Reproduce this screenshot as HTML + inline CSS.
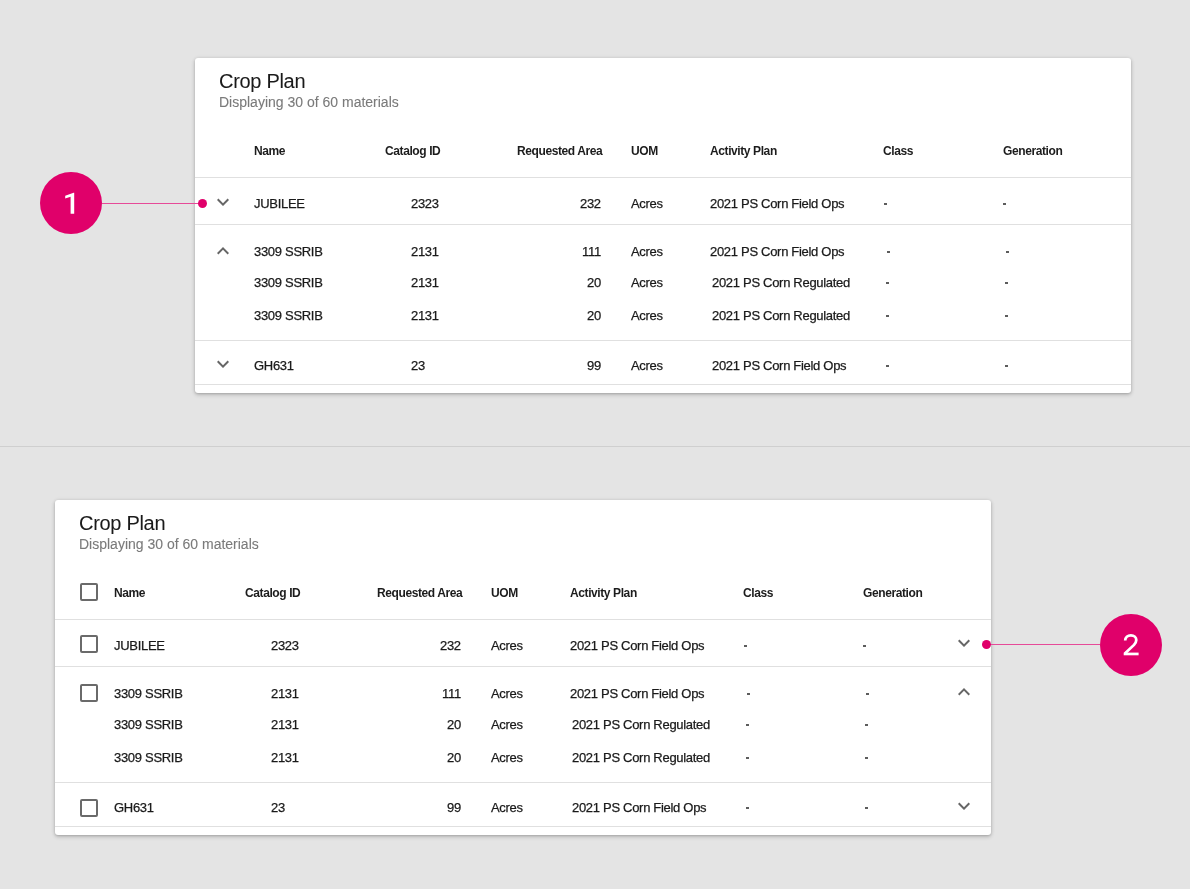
<!DOCTYPE html>
<html><head><meta charset="utf-8"><style>
html,body{margin:0;padding:0}
body{width:1190px;height:889px;background:#e4e4e4;position:relative;overflow:hidden;font-family:"Liberation Sans",sans-serif}
.card{position:absolute;width:936px;height:335px;background:#fff;border-radius:3px;box-shadow:0 2px 4px rgba(0,0,0,0.16),0 1px 2px rgba(0,0,0,0.1),0 0 4px rgba(0,0,0,0.09)}
.t{will-change:transform}
.t{position:absolute;white-space:nowrap;line-height:1}
.ic{position:absolute}
.cb{position:absolute;width:14px;height:14px;border:2px solid #6a6a6a;border-radius:2px}
.hl{position:absolute;height:1px;background:#e0e0e0}
.dash{position:absolute;width:3px;height:2px;background:#5c5c5c}
.hlm{position:absolute;height:1px;background:#e64a98}
.dot{position:absolute;width:9px;height:9px;border-radius:50%;background:#e0006a}
.circ{position:absolute;width:62px;height:62px;border-radius:50%;background:#e0006a;color:#fff}
.div{position:absolute;left:0;width:1190px;top:446px;height:1px;background:#cfcfcf}
</style></head><body>
<div class="card" style="left:195px;top:58px">
<div class="t" style="left:24px;top:13.09px;font-size:20px;font-weight:400;color:#1a1a1a;letter-spacing:-0.3px;-webkit-text-stroke:0.05px #1a1a1a">Crop Plan</div>
<div class="t" style="left:23.5px;top:37.07px;font-size:14px;font-weight:400;color:#7a7a7a;letter-spacing:0px;-webkit-text-stroke:0.1px #7a7a7a">Displaying 30 of 60 materials</div>
<div class="t" style="left:59px;top:86.83px;font-size:12px;font-weight:700;color:#1c1c1c;letter-spacing:-0.4px">Name</div>
<div class="t" style="right:690.5px;top:86.83px;font-size:12px;font-weight:700;color:#1c1c1c;letter-spacing:-0.4px;text-align:right">Catalog ID</div>
<div class="t" style="right:529px;top:86.83px;font-size:12px;font-weight:700;color:#1c1c1c;letter-spacing:-0.4px;text-align:right">Requested Area</div>
<div class="t" style="left:436px;top:86.83px;font-size:12px;font-weight:700;color:#1c1c1c;letter-spacing:-0.4px">UOM</div>
<div class="t" style="left:515px;top:86.83px;font-size:12px;font-weight:700;color:#1c1c1c;letter-spacing:-0.4px">Activity Plan</div>
<div class="t" style="left:688px;top:86.83px;font-size:12px;font-weight:700;color:#1c1c1c;letter-spacing:-0.4px">Class</div>
<div class="t" style="left:807.5px;top:86.83px;font-size:12px;font-weight:700;color:#1c1c1c;letter-spacing:-0.4px">Generation</div>
<div class="hl" style="top:119px;left:0px;width:936px"></div>
<svg class="ic" style="left:16.4px;top:131.6px" width="24" height="24" viewBox="0 0 24 24"><path d="M16.59 8.59L12 13.17 7.41 8.59 6 10l6 6 6-6z" fill="#666"/></svg>
<div class="t" style="left:59px;top:139.30px;font-size:13px;font-weight:400;color:#1a1a1a;letter-spacing:-0.3px;-webkit-text-stroke:0.25px #1a1a1a">JUBILEE</div>
<div class="t" style="left:216px;top:139.30px;font-size:13px;font-weight:400;color:#1a1a1a;letter-spacing:-0.3px;-webkit-text-stroke:0.25px #1a1a1a">2323</div>
<div class="t" style="right:530.5px;top:139.30px;font-size:13px;font-weight:400;color:#1a1a1a;letter-spacing:-0.3px;text-align:right;-webkit-text-stroke:0.25px #1a1a1a">232</div>
<div class="t" style="left:436px;top:139.30px;font-size:13px;font-weight:400;color:#1a1a1a;letter-spacing:-0.3px;-webkit-text-stroke:0.25px #1a1a1a">Acres</div>
<div class="t" style="left:515px;top:139.30px;font-size:13px;font-weight:400;color:#1a1a1a;letter-spacing:-0.3px;-webkit-text-stroke:0.25px #1a1a1a">2021 PS Corn Field Ops</div>
<div class="dash" style="left:689px;top:145px"></div>
<div class="dash" style="left:808px;top:145px"></div>
<svg class="ic" style="left:16.4px;top:180.6px" width="24" height="24" viewBox="0 0 24 24"><path d="M12 8l-6 6 1.41 1.41L12 10.83l4.59 4.58L18 14z" fill="#666"/></svg>
<div class="t" style="left:59px;top:187.30px;font-size:13px;font-weight:400;color:#1a1a1a;letter-spacing:-0.3px;-webkit-text-stroke:0.25px #1a1a1a">3309 SSRIB</div>
<div class="t" style="left:216px;top:187.30px;font-size:13px;font-weight:400;color:#1a1a1a;letter-spacing:-0.3px;-webkit-text-stroke:0.25px #1a1a1a">2131</div>
<div class="t" style="right:530.5px;top:187.30px;font-size:13px;font-weight:400;color:#1a1a1a;letter-spacing:-0.3px;text-align:right;-webkit-text-stroke:0.25px #1a1a1a">111</div>
<div class="t" style="left:436px;top:187.30px;font-size:13px;font-weight:400;color:#1a1a1a;letter-spacing:-0.3px;-webkit-text-stroke:0.25px #1a1a1a">Acres</div>
<div class="t" style="left:515px;top:187.30px;font-size:13px;font-weight:400;color:#1a1a1a;letter-spacing:-0.3px;-webkit-text-stroke:0.25px #1a1a1a">2021 PS Corn Field Ops</div>
<div class="dash" style="left:692px;top:193px"></div>
<div class="dash" style="left:811px;top:193px"></div>
<div class="t" style="left:59px;top:218.30px;font-size:13px;font-weight:400;color:#1a1a1a;letter-spacing:-0.3px;-webkit-text-stroke:0.25px #1a1a1a">3309 SSRIB</div>
<div class="t" style="left:216px;top:218.30px;font-size:13px;font-weight:400;color:#1a1a1a;letter-spacing:-0.3px;-webkit-text-stroke:0.25px #1a1a1a">2131</div>
<div class="t" style="right:530.5px;top:218.30px;font-size:13px;font-weight:400;color:#1a1a1a;letter-spacing:-0.3px;text-align:right;-webkit-text-stroke:0.25px #1a1a1a">20</div>
<div class="t" style="left:436px;top:218.30px;font-size:13px;font-weight:400;color:#1a1a1a;letter-spacing:-0.3px;-webkit-text-stroke:0.25px #1a1a1a">Acres</div>
<div class="t" style="left:516.5px;top:218.30px;font-size:13px;font-weight:400;color:#1a1a1a;letter-spacing:-0.3px;-webkit-text-stroke:0.25px #1a1a1a">2021 PS Corn Regulated</div>
<div class="dash" style="left:691px;top:224px"></div>
<div class="dash" style="left:810px;top:224px"></div>
<div class="t" style="left:59px;top:251.30px;font-size:13px;font-weight:400;color:#1a1a1a;letter-spacing:-0.3px;-webkit-text-stroke:0.25px #1a1a1a">3309 SSRIB</div>
<div class="t" style="left:216px;top:251.30px;font-size:13px;font-weight:400;color:#1a1a1a;letter-spacing:-0.3px;-webkit-text-stroke:0.25px #1a1a1a">2131</div>
<div class="t" style="right:530.5px;top:251.30px;font-size:13px;font-weight:400;color:#1a1a1a;letter-spacing:-0.3px;text-align:right;-webkit-text-stroke:0.25px #1a1a1a">20</div>
<div class="t" style="left:436px;top:251.30px;font-size:13px;font-weight:400;color:#1a1a1a;letter-spacing:-0.3px;-webkit-text-stroke:0.25px #1a1a1a">Acres</div>
<div class="t" style="left:516.5px;top:251.30px;font-size:13px;font-weight:400;color:#1a1a1a;letter-spacing:-0.3px;-webkit-text-stroke:0.25px #1a1a1a">2021 PS Corn Regulated</div>
<div class="dash" style="left:691px;top:257px"></div>
<div class="dash" style="left:810px;top:257px"></div>
<svg class="ic" style="left:16.4px;top:294.0px" width="24" height="24" viewBox="0 0 24 24"><path d="M16.59 8.59L12 13.17 7.41 8.59 6 10l6 6 6-6z" fill="#666"/></svg>
<div class="t" style="left:59px;top:301.30px;font-size:13px;font-weight:400;color:#1a1a1a;letter-spacing:-0.3px;-webkit-text-stroke:0.25px #1a1a1a">GH631</div>
<div class="t" style="left:216px;top:301.30px;font-size:13px;font-weight:400;color:#1a1a1a;letter-spacing:-0.3px;-webkit-text-stroke:0.25px #1a1a1a">23</div>
<div class="t" style="right:530.5px;top:301.30px;font-size:13px;font-weight:400;color:#1a1a1a;letter-spacing:-0.3px;text-align:right;-webkit-text-stroke:0.25px #1a1a1a">99</div>
<div class="t" style="left:436px;top:301.30px;font-size:13px;font-weight:400;color:#1a1a1a;letter-spacing:-0.3px;-webkit-text-stroke:0.25px #1a1a1a">Acres</div>
<div class="t" style="left:516.5px;top:301.30px;font-size:13px;font-weight:400;color:#1a1a1a;letter-spacing:-0.3px;-webkit-text-stroke:0.25px #1a1a1a">2021 PS Corn Field Ops</div>
<div class="dash" style="left:691px;top:307px"></div>
<div class="dash" style="left:810px;top:307px"></div>
<div class="hl" style="top:166px;left:0px;width:936px"></div>
<div class="hl" style="top:282px;left:0px;width:936px"></div>
<div class="hl" style="top:326px;left:0px;width:936px"></div>
</div>
<div class="hlm" style="left:102px;top:203px;width:100px"></div>
<div class="dot" style="left:197.5px;top:198.5px"></div>
<div class="circ" style="left:40px;top:172px"><svg width="62" height="62" style="position:absolute;left:0;top:0"><polygon points="30.60,41.80 34.20,41.80 34.20,20.70 33.60,20.70 25.20,23.80 25.20,26.60 30.60,24.70" fill="#fff"/></svg></div>
<div class="div"></div>
<div class="card" style="left:55px;top:500px">
<div class="t" style="left:24px;top:13.09px;font-size:20px;font-weight:400;color:#1a1a1a;letter-spacing:-0.3px;-webkit-text-stroke:0.05px #1a1a1a">Crop Plan</div>
<div class="t" style="left:23.5px;top:37.07px;font-size:14px;font-weight:400;color:#7a7a7a;letter-spacing:0px;-webkit-text-stroke:0.1px #7a7a7a">Displaying 30 of 60 materials</div>
<div class="cb" style="left:24.5px;top:83.45px"></div>
<div class="t" style="left:59px;top:86.83px;font-size:12px;font-weight:700;color:#1c1c1c;letter-spacing:-0.4px">Name</div>
<div class="t" style="right:690.5px;top:86.83px;font-size:12px;font-weight:700;color:#1c1c1c;letter-spacing:-0.4px;text-align:right">Catalog ID</div>
<div class="t" style="right:529px;top:86.83px;font-size:12px;font-weight:700;color:#1c1c1c;letter-spacing:-0.4px;text-align:right">Requested Area</div>
<div class="t" style="left:436px;top:86.83px;font-size:12px;font-weight:700;color:#1c1c1c;letter-spacing:-0.4px">UOM</div>
<div class="t" style="left:515px;top:86.83px;font-size:12px;font-weight:700;color:#1c1c1c;letter-spacing:-0.4px">Activity Plan</div>
<div class="t" style="left:688px;top:86.83px;font-size:12px;font-weight:700;color:#1c1c1c;letter-spacing:-0.4px">Class</div>
<div class="t" style="left:807.5px;top:86.83px;font-size:12px;font-weight:700;color:#1c1c1c;letter-spacing:-0.4px">Generation</div>
<div class="hl" style="top:119px;left:0px;width:936px"></div>
<div class="cb" style="left:24.5px;top:134.5px"></div>
<svg class="ic" style="left:897.1px;top:131.2px" width="24" height="24" viewBox="0 0 24 24"><path d="M16.59 8.59L12 13.17 7.41 8.59 6 10l6 6 6-6z" fill="#666"/></svg>
<div class="t" style="left:59px;top:139.30px;font-size:13px;font-weight:400;color:#1a1a1a;letter-spacing:-0.3px;-webkit-text-stroke:0.25px #1a1a1a">JUBILEE</div>
<div class="t" style="left:216px;top:139.30px;font-size:13px;font-weight:400;color:#1a1a1a;letter-spacing:-0.3px;-webkit-text-stroke:0.25px #1a1a1a">2323</div>
<div class="t" style="right:530.5px;top:139.30px;font-size:13px;font-weight:400;color:#1a1a1a;letter-spacing:-0.3px;text-align:right;-webkit-text-stroke:0.25px #1a1a1a">232</div>
<div class="t" style="left:436px;top:139.30px;font-size:13px;font-weight:400;color:#1a1a1a;letter-spacing:-0.3px;-webkit-text-stroke:0.25px #1a1a1a">Acres</div>
<div class="t" style="left:515px;top:139.30px;font-size:13px;font-weight:400;color:#1a1a1a;letter-spacing:-0.3px;-webkit-text-stroke:0.25px #1a1a1a">2021 PS Corn Field Ops</div>
<div class="dash" style="left:689px;top:145px"></div>
<div class="dash" style="left:808px;top:145px"></div>
<div class="cb" style="left:24.5px;top:184.4px"></div>
<svg class="ic" style="left:897.1px;top:180.2px" width="24" height="24" viewBox="0 0 24 24"><path d="M12 8l-6 6 1.41 1.41L12 10.83l4.59 4.58L18 14z" fill="#666"/></svg>
<div class="t" style="left:59px;top:187.30px;font-size:13px;font-weight:400;color:#1a1a1a;letter-spacing:-0.3px;-webkit-text-stroke:0.25px #1a1a1a">3309 SSRIB</div>
<div class="t" style="left:216px;top:187.30px;font-size:13px;font-weight:400;color:#1a1a1a;letter-spacing:-0.3px;-webkit-text-stroke:0.25px #1a1a1a">2131</div>
<div class="t" style="right:530.5px;top:187.30px;font-size:13px;font-weight:400;color:#1a1a1a;letter-spacing:-0.3px;text-align:right;-webkit-text-stroke:0.25px #1a1a1a">111</div>
<div class="t" style="left:436px;top:187.30px;font-size:13px;font-weight:400;color:#1a1a1a;letter-spacing:-0.3px;-webkit-text-stroke:0.25px #1a1a1a">Acres</div>
<div class="t" style="left:515px;top:187.30px;font-size:13px;font-weight:400;color:#1a1a1a;letter-spacing:-0.3px;-webkit-text-stroke:0.25px #1a1a1a">2021 PS Corn Field Ops</div>
<div class="dash" style="left:692px;top:193px"></div>
<div class="dash" style="left:811px;top:193px"></div>
<div class="t" style="left:59px;top:218.30px;font-size:13px;font-weight:400;color:#1a1a1a;letter-spacing:-0.3px;-webkit-text-stroke:0.25px #1a1a1a">3309 SSRIB</div>
<div class="t" style="left:216px;top:218.30px;font-size:13px;font-weight:400;color:#1a1a1a;letter-spacing:-0.3px;-webkit-text-stroke:0.25px #1a1a1a">2131</div>
<div class="t" style="right:530.5px;top:218.30px;font-size:13px;font-weight:400;color:#1a1a1a;letter-spacing:-0.3px;text-align:right;-webkit-text-stroke:0.25px #1a1a1a">20</div>
<div class="t" style="left:436px;top:218.30px;font-size:13px;font-weight:400;color:#1a1a1a;letter-spacing:-0.3px;-webkit-text-stroke:0.25px #1a1a1a">Acres</div>
<div class="t" style="left:516.5px;top:218.30px;font-size:13px;font-weight:400;color:#1a1a1a;letter-spacing:-0.3px;-webkit-text-stroke:0.25px #1a1a1a">2021 PS Corn Regulated</div>
<div class="dash" style="left:691px;top:224px"></div>
<div class="dash" style="left:810px;top:224px"></div>
<div class="t" style="left:59px;top:251.30px;font-size:13px;font-weight:400;color:#1a1a1a;letter-spacing:-0.3px;-webkit-text-stroke:0.25px #1a1a1a">3309 SSRIB</div>
<div class="t" style="left:216px;top:251.30px;font-size:13px;font-weight:400;color:#1a1a1a;letter-spacing:-0.3px;-webkit-text-stroke:0.25px #1a1a1a">2131</div>
<div class="t" style="right:530.5px;top:251.30px;font-size:13px;font-weight:400;color:#1a1a1a;letter-spacing:-0.3px;text-align:right;-webkit-text-stroke:0.25px #1a1a1a">20</div>
<div class="t" style="left:436px;top:251.30px;font-size:13px;font-weight:400;color:#1a1a1a;letter-spacing:-0.3px;-webkit-text-stroke:0.25px #1a1a1a">Acres</div>
<div class="t" style="left:516.5px;top:251.30px;font-size:13px;font-weight:400;color:#1a1a1a;letter-spacing:-0.3px;-webkit-text-stroke:0.25px #1a1a1a">2021 PS Corn Regulated</div>
<div class="dash" style="left:691px;top:257px"></div>
<div class="dash" style="left:810px;top:257px"></div>
<div class="cb" style="left:24.5px;top:298.5px"></div>
<svg class="ic" style="left:897.1px;top:293.59999999999997px" width="24" height="24" viewBox="0 0 24 24"><path d="M16.59 8.59L12 13.17 7.41 8.59 6 10l6 6 6-6z" fill="#666"/></svg>
<div class="t" style="left:59px;top:301.30px;font-size:13px;font-weight:400;color:#1a1a1a;letter-spacing:-0.3px;-webkit-text-stroke:0.25px #1a1a1a">GH631</div>
<div class="t" style="left:216px;top:301.30px;font-size:13px;font-weight:400;color:#1a1a1a;letter-spacing:-0.3px;-webkit-text-stroke:0.25px #1a1a1a">23</div>
<div class="t" style="right:530.5px;top:301.30px;font-size:13px;font-weight:400;color:#1a1a1a;letter-spacing:-0.3px;text-align:right;-webkit-text-stroke:0.25px #1a1a1a">99</div>
<div class="t" style="left:436px;top:301.30px;font-size:13px;font-weight:400;color:#1a1a1a;letter-spacing:-0.3px;-webkit-text-stroke:0.25px #1a1a1a">Acres</div>
<div class="t" style="left:516.5px;top:301.30px;font-size:13px;font-weight:400;color:#1a1a1a;letter-spacing:-0.3px;-webkit-text-stroke:0.25px #1a1a1a">2021 PS Corn Field Ops</div>
<div class="dash" style="left:691px;top:307px"></div>
<div class="dash" style="left:810px;top:307px"></div>
<div class="hl" style="top:166px;left:0px;width:936px"></div>
<div class="hl" style="top:282px;left:0px;width:936px"></div>
<div class="hl" style="top:326px;left:0px;width:936px"></div>
</div>
<div class="hlm" style="left:986px;top:644px;width:114px"></div>
<div class="dot" style="left:981.5px;top:640.0px"></div>
<div class="circ" style="left:1100px;top:613.5px"><svg width="62" height="62" style="position:absolute;left:0;top:0"><path d="M 25.20 26.50 C 25.20 23.20 27.60 21.30 30.90 21.30 C 34.20 21.30 36.30 23.40 36.30 26.00 C 36.30 27.80 35.60 29.10 34.00 30.90 L 24.90 39.40" fill="none" stroke="#fff" stroke-width="2.75"/><rect x="23.70" y="38.60" width="14.9" height="2.7" fill="#fff"/></svg></div>
</body></html>
